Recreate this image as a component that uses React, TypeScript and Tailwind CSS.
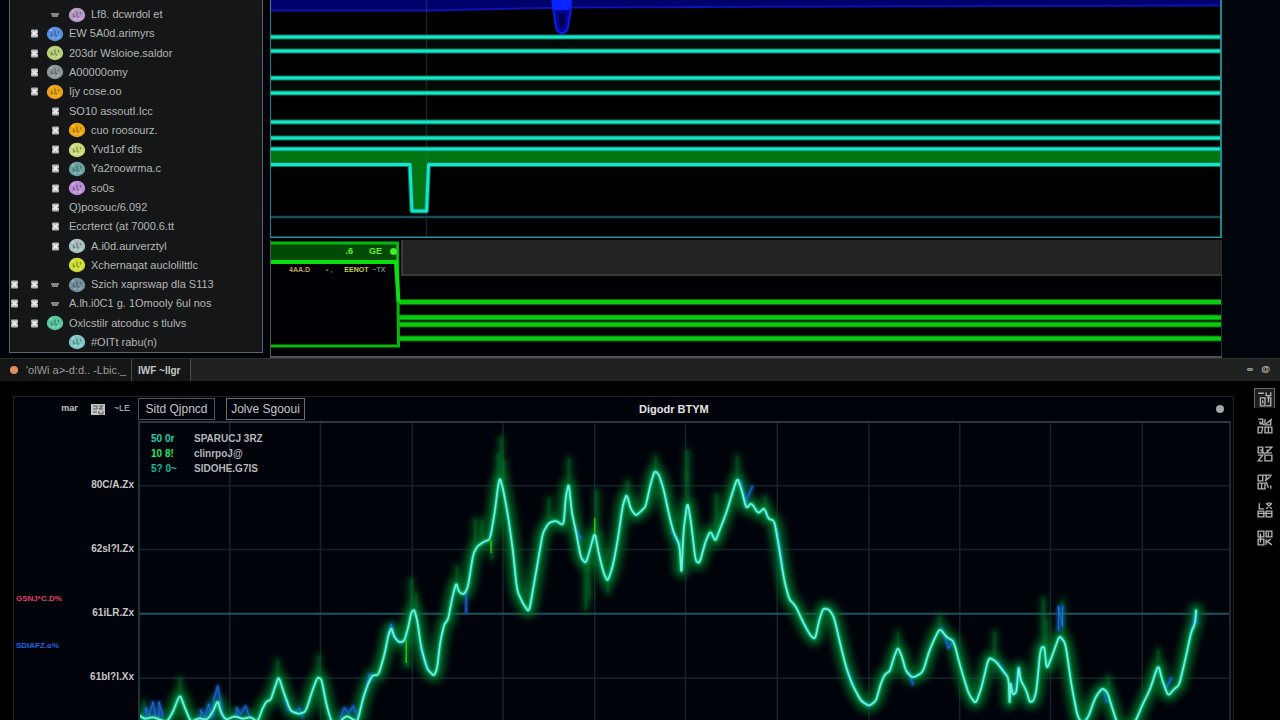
import type { ReactNode } from 'react';
import clsx from 'clsx';

type TreeRow = {
    label: string;
    marks: string; // one character per column: x = box, d = dash, - = empty, o = node icon
    color?: string;
};

const treeRows: TreeRow[] = [
    { label: 'Lf8. dcwrdol et', marks: '--do', color: '#b79ac6' },
    { label: 'EW 5A0d.arimyrs', marks: '-xo', color: '#5a8fe0' },
    { label: '203dr Wsloioe.saldor', marks: '-xo', color: '#b9cf78' },
    { label: 'A00000omy', marks: '-xo', color: '#8b9797' },
    { label: 'Ijy cose.oo', marks: '-xo', color: '#eca40f' },
    { label: 'SO10 assoutI.Icc', marks: '--x' },
    { label: 'cuo roosourz.', marks: '--xo', color: '#eda80e' },
    { label: 'Yvd1of dfs', marks: '--xo', color: '#cbdc78' },
    { label: 'Ya2roowrma.c', marks: '--xo', color: '#68a3a3' },
    { label: 'so0s', marks: '--xo', color: '#bd8edb' },
    { label: 'Q)posouc/6.092', marks: '--x' },
    { label: 'Eccrterct (at 7000.6.tt', marks: '--x' },
    { label: 'A.i0d.aurverztyl', marks: '--xo', color: '#a9c0c0' },
    { label: 'Xchernaqat auclolilttlc', marks: '---o', color: '#cfe032' },
    { label: 'Szich xaprswap dla S113', marks: 'xxdo', color: '#74909c' },
    { label: 'A.lh.i0C1 g. 1Omooly 6ul nos', marks: 'xxd' },
    { label: 'Oxlcstilr atcoduc s tlulvs', marks: 'xxo', color: '#5cc79f' },
    { label: '#OITt rabu(n)', marks: '---o', color: '#7fc6c6' },
];

const columnWidths = ['w-[14px]', 'w-5 justify-center', 'w-[22px] justify-center', 'w-[22px] justify-center'];

function Mark({ kind, color }: { kind: string; color?: string }) {
    if (kind === 'x') {
        return (
            <svg width="9" height="9" viewBox="0 0 9 9">
                <rect x="1" y="0.5" width="7" height="8" rx="1" fill="#b4b8b8" />
                <path d="M2.500 2.500l4 4M6.500 2.500l-4 4" stroke="#f2f2f2" strokeWidth="1.600" />
                <path d="M1 4h1M7 4.500h1" stroke="#4b5050" strokeWidth="1" />
            </svg>
        );
    }
    if (kind === 'd') {
        return (
            <svg width="10" height="6" viewBox="0 0 10 6">
                <path d="M1 2h8M2 4h6" stroke="#a5adad" strokeWidth="1.600" />
            </svg>
        );
    }
    if (kind === 'o') {
        return (
            <svg width="18" height="16" viewBox="0 0 18 16" className="shrink-0">
                <ellipse cx="9" cy="8" rx="8.200" ry="7.200" fill={color} />
                <path d="M9 4.500v4l2 2M5.500 6.500v3h2M12.500 5v2.500" fill="none" stroke="#1c2626" strokeOpacity="0.4" strokeWidth="1.300" />
                <path d="M4 5l2-2M10.500 12.500l3-2M6 12h2" stroke="#fff" strokeOpacity="0.35" strokeWidth="1.400" />
            </svg>
        );
    }
    return null;
}

function Tree() {
    return (
        <ul className="ml-[9px] mb-[5px] w-[254px] flex flex-col border border-t-0 border-[#5f6363] bg-[#141617] pt-[5px] text-[11px] text-[#b4b6b6]">
            {treeRows.map((row) => (
                <li key={row.label} className="flex flex-1 items-center">
                    {row.marks.split('').map((kind, i) => (
                        <span key={i} className={clsx('flex shrink-0', columnWidths[i])}>
                            <Mark kind={kind} color={row.color} />
                        </span>
                    ))}
                    <span className="whitespace-nowrap pl-[3px] leading-none">{row.label}</span>
                </li>
            ))}
        </ul>
    );
}

const signalLines = [37, 51, 78, 93, 122, 138, 149];

function SignalPane() {
    return (
        <div className="bg-black">
            <svg viewBox="270 0 952 238" preserveAspectRatio="none" className="block h-[238px] w-full">
                {/* blue band */}
                <path d="M270 0H1222V5L850 6 570 7 426 10H270z" fill="#00006c" />
                <path d="M270 10.500H426L570 7.500 850 6.500 1222 5.500" fill="none" stroke="#0a12b8" strokeWidth="2" />
                <path d="M553 0h18v8l-3 19q-1 6-6 6t-6-6l-3-19z" fill="#0204a0" stroke="#0c1ce4" strokeWidth="2" />
                <path d="M551 0h20l-2 10h-15z" fill="#0a24ff" />
                <path d="M559 13h6v14h-6z" fill="#010148" />
                <path d="M270 37h952v14H270zM270 78h952v15H270zM270 122h952v16H270z" fill="#000a05" />
                <path d="M270 149H1222V164.500H429L427 211H412L410 164.500H270z" fill="#00740e" />
                <path d="M426.500 0V238" stroke="#3e6a6a" strokeOpacity="0.35" strokeWidth="1.500" />
                {signalLines.map((y) => (
                    <g key={y}>
                        <path d={`M271 ${y}H1221`} stroke="#087a66" strokeWidth="5" />
                        <path d={`M271 ${y}H1221`} stroke="#14e6c6" strokeWidth="3" />
                    </g>
                ))}
                <path d="M271 164.500H410L412 211H426.500L428.500 164.500H1221" fill="none" stroke="#087a66" strokeWidth="5" strokeLinejoin="round" />
                <path d="M271 164.500H410L412 211H426.500L428.500 164.500H1221" fill="none" stroke="#14e6c6" strokeWidth="3" strokeLinejoin="round" />
                <path d="M270 217H1222" stroke="#174c58" strokeWidth="2.500" />
                <path d="M270 0V237.500H1221V0" fill="none" stroke="#25939b" strokeWidth="1.800" />
            </svg>
        </div>
    );
}

function TriggerPane() {
    return (
        <div className="mt-[2px] flex h-[118px] border-b-2 border-l border-[#505256] bg-[#000104]">
            <div className="relative w-[130px] shrink-0">
                <svg viewBox="271 240 130 116" className="absolute inset-0 h-full w-full">
                    <path d="M271 243H398V262H271z" fill="#004b04" />
                    <path d="M271 243H397.500L398.500 346H271" fill="none" stroke="#08b80c" strokeWidth="3" />
                    <path d="M271 262H396L398.500 302" fill="none" stroke="#0ae010" strokeWidth="4" />
                </svg>
                <div className="relative flex h-[23px] items-center justify-end gap-4 pr-1 text-[9px] font-bold text-[#66f02c]">
                    <span>.6</span>
                    <span>GE</span>
                    <span className="-ml-2 h-[7px] w-[7px] rounded-full bg-[#46e828]" />
                </div>
                <div className="relative flex h-3 items-center pl-[18px] text-[7px] font-bold leading-none">
                    <span className="text-[#c3a05c]">4AA.D</span>
                    <span className="ml-4 text-[#6b7c80]">• ,</span>
                    <span className="ml-3 text-[#c8cf4e]">EENOT</span>
                    <span className="ml-1 text-[#7d8487]">~TX</span>
                </div>
            </div>
            <div className="flex flex-1 flex-col border-r border-[#2a2c2c]">
                <div className="h-9 border-b-2 border-l-2 border-[#3a3c3c] bg-[#232323]" />
                <svg viewBox="401 276 820 80" preserveAspectRatio="none" className="block w-full flex-1 overflow-visible">
                    <path d="M397 302H1221M397 317.500H1221M397 324.500H1221M397 338.500H1221" stroke="#056a05" strokeWidth="6" />
                    <path d="M397 302H1221M397 317.500H1221M397 324.500H1221M397 338.500H1221" stroke="#0ccc10" strokeWidth="4" />
                </svg>
            </div>
        </div>
    );
}

// Engine speed trace, in plot units
const trace =
    '139,716 144,719 152,717 160,720 166,722 172,712 179,694 184,708 190,722 198,718 206,720 212,712 217,700 220,712 225,720 234,716 242,719 250,717 257,722 262,708 266,701 270,700 274,688 278,676 283,692 290,711 298,714 305,712 312,690 317,677 321,679 326,705 331,722 338,724 343,718 347,716 352,719 357,722 363,697 368,683 372,675 378,675 384,655 388,635 391,627 394,637 399,642 404,641 408,627 411,612 414,609 417,620 421,648 427,669 434,676 437,668 440,642 444,624 448,619 452,598 456,582 459,592 464,594 468,586 473,554 477,546 484,541 490,539 495,510 498,485 500,477 503,488 508,515 513,550 517,590 523,603 529,612 533,590 539,555 543,532 549,522 556,520 562,524 564,522 566,495 569,482 572,512 576,530 581,557 586,563 590,550 595,531 599,553 604,573 608,581 613,566 618,540 623,505 627,493 631,508 636,515 641,511 646,506 651,483 655,470 659,473 664,488 669,512 674,532 680,544 682,576 684,530 688,500 692,525 696,560 700,563 706,541 711,530 716,541 720,530 727,512 733,492 738,477 742,488 747,508 752,502 759,513 765,507 769,518 775,520 779,542 785,580 790,599 796,605 804,622 811,635 816,639 820,620 824,608 830,609 835,617 841,643 847,667 853,684 862,701 870,706 877,701 882,683 886,674 891,671 895,657 899,647 903,656 907,671 914,678 924,672 930,652 935,640 941,628 948,637 955,641 962,668 970,694 977,704 983,687 990,657 997,661 1004,670 1010,678 1011,706 1012,681 1014,695 1018,692 1020,665 1022,680 1028,691 1031,702 1035,701 1038,690 1042,648 1046,646 1048,670 1055,652 1061,635 1067,643 1073,685 1079,716 1084,724 1090,717 1097,697 1104,688 1109,692 1113,705 1119,724 1128,730 1137,722 1145,703 1152,689 1160,664 1164,680 1170,696 1176,689 1181,685 1187,660 1193,632 1197,623 1198,610';

// Rounds the corners by running quadratic curves through the segment midpoints
function smooth(points: string) {
    const p = points.split(' ').map((pair) => pair.split(',').map(Number));
    let d = `M${p[0][0]} ${p[0][1]}`;
    for (let i = 1; i < p.length - 1; i++) {
        const [x, y] = p[i];
        const [nx, ny] = p[i + 1];
        const [px, py] = p[i - 1];
        d += `L${x + (px - x) * 0.3} ${y + (py - y) * 0.3}Q${x} ${y} ${x + (nx - x) * 0.3} ${y + (ny - y) * 0.3}`;
    }
    const last = p[p.length - 1];
    return `${d}L${last[0]} ${last[1]}`;
}

const tracePath = smooth(trace);

// Raw samples around the filtered trace
const greenNoise =
    'M143 722v-20M179 694v-16M277 674v-14M318 676v-20M408 628v38M411 607v-28M416 606v-12M405 640v25M457 580v-14M475 545v-26M482 538v-18M492 540v18M498 476v-22M501 474v-37M504 478v-18M549 518v-20M569 480v-22M586 563v46M589 560v38M597 530v-40M595 520v24M608 582v10M628 490v-10M656 468v-12M688 500v-50M687 480v-10M717 540v-46M738 476v-20M766 508v-12M899 646v-14M941 626v-10M996 660v-28M1045 645v-47M1048 650v-30M1064 635v-34M1110 690v-14M1160 662v-12';
const blueNoise =
    'M145 720v-12l3 8 4-14 3 15M158 718v-16l4 14M200 720v-10l4 8 4-14 3 14M213 716v-16l4-14 2 12 3 20M236 718v-10l4 6 5-8 4 12M284 698l4 12 6 2 5-4 3 9M340 718l4-10 4 5 5-7 4 10M364 696l5-22 4 6M387 636l4-12 4 14 6 5M421 648l6 20M466 592v20M576 528l5 10M673 530l8 18M741 480l5 22 7-16M778 530l5 38M848 670l6 16M870 706l-5-4M910 672l4 12M943 628l7 20 5-8M1000 662l6 12M1016 694l4-26M1060 630v-24l4 20v-20M1105 690l3 12M1168 688l5-10M1194 630l3-18 2 10';

const gridX = [229, 320, 412, 503, 595, 686, 778, 870, 961, 1052, 1144];
const gridY = [485, 549, 678];

function Plot() {
    return (
        <svg viewBox="139 422 1092 298" preserveAspectRatio="none" className="absolute inset-0 h-full w-full">
            <defs>
                <filter id="wide" x="-5%" y="-10%" width="110%" height="120%">
                    <feGaussianBlur stdDeviation="4" />
                </filter>
                <filter id="tight" x="-5%" y="-10%" width="110%" height="120%">
                    <feGaussianBlur stdDeviation="1.200" />
                </filter>
            </defs>
            <g stroke="#14242a" strokeWidth="1.500">
                {gridX.map((x) => <path key={x} d={`M${x} 422V720`} />)}
                {gridY.map((y) => <path key={y} d={`M139 ${y}H1231`} />)}
            </g>
            <path d="M139 613.500H1231" stroke="#175660" strokeWidth="2" />
            <g fill="none" strokeLinejoin="round" strokeLinecap="round">
                <path d={greenNoise} stroke="#0a7a24" strokeOpacity="0.6" strokeWidth="6" filter="url(#wide)" />
                <path d={tracePath} stroke="#066a26" strokeOpacity="0.85" strokeWidth="15" filter="url(#wide)" />
                <path d={greenNoise} stroke="#0e8a30" strokeOpacity="0.45" strokeWidth="2" filter="url(#tight)" />
                <path d={blueNoise} stroke="#1250c8" strokeOpacity="0.75" strokeWidth="4" filter="url(#tight)" />
                <path d={blueNoise} stroke="#2c94c8" strokeOpacity="0.6" strokeWidth="1" />
                <path d="M406 640v22M595 518v14M491 540v12" stroke="#48d808" strokeOpacity="0.8" strokeWidth="1.500" />
                <path d={tracePath} stroke="#0db27c" strokeWidth="4" filter="url(#tight)" />
                <path d={tracePath} stroke="#6ff0dc" strokeWidth="1.800" />
            </g>
        </svg>
    );
}

const legend = [
    { code: '50 0r', name: 'SPARUCJ 3RZ', style: 'text-[#1fd0a8]' },
    { code: '10 8!', name: 'clinrpoJ@', style: 'text-[#1fe860]' },
    { code: '5? 0~', name: 'SIDOHE.G7IS', style: 'text-[#17b89c]' },
];

const axisLabels = ['80C/A.Zx', '62sI?I.Zx', '61iLR.Zx', '61bI?I.Xx'];

const tools: { name: string; glyph: ReactNode }[] = [
    { name: 'Layout', glyph: <path d="M1 2h5M8 1v3h4V1M3 6h4v7H3zM9 6h3v7H8M5 8v3M10 4v6" /> },
    { name: 'Cursor', glyph: <path d="M1 1h4v4H2M7 1v5h5V2M8 5l5-4M1 8h4l-1 5H1zM7 8h6v5H7zM10 8v5M2 3l4 3" /> },
    { name: 'Zoom', glyph: <path d="M1 1h4v5H1zM7 1h6l-5 5h5M1 8h4l-4 5h4M7 8h6v5H7zM3 3l4 4M9 3v3" /> },
    { name: 'Measure', glyph: <path d="M1 1h12M1 1v5h4V1M7 6l5-4M1 8h6v5H1zM8 7l2 5M12 10v3M4 8v5M8 1v4" /> },
    { name: 'Markers', glyph: <path d="M2 1v5h4M8 1l5 5M13 1L8 6M1 8h5v5H1zM8 8h5v5H8zM1 10h12M9 1h3" /> },
    { name: 'Table', glyph: <path d="M1 1h5v5H1zM8 1h5v5H8zM1 8v5h5V8zM8 8v5M12 8l-3 2 4 3M10 2v4M3 3v8" /> },
];

export default function App() {
    return (
        <div className="flex h-screen flex-col overflow-hidden bg-black font-['Liberation_Sans',sans-serif] text-[#c4c6c6]">
            <div className="flex bg-[#01030a]">
                <aside className="flex w-[270px] shrink-0">
                    <Tree />
                </aside>
                <main className="min-w-0 flex-1">
                    <SignalPane />
                    <TriggerPane />
                </main>
                <div className="w-[58px] shrink-0 bg-[#01050c]" />
            </div>

            {/* Document tabs */}
            <div className="flex h-[23px] shrink-0 items-center border-t border-[#2d2f2f] bg-[#202222] text-[11px]">
                <div className="flex h-full items-center bg-[#151616]">
                    <button className="flex h-full w-[132px] items-center gap-2 overflow-hidden border-r border-[#4a4c4c] pl-[10px] text-[#9b9d9d]">
                        <span className="h-2 w-2 shrink-0 rounded-full bg-[#e09060]" />
                        <span className="whitespace-nowrap">'olWi a&gt;-d:d.. -Lbic._</span>
                    </button>
                    <button className="h-full w-[59px] border-r border-[#4a4c4c] pl-[6px] text-left text-[10px] font-bold">IWF ~Ilgr</button>
                </div>
                <div className="ml-auto flex items-center gap-2 pr-[10px] text-[9px] font-bold">
                    <button>∞</button>
                    <button>@</button>
                </div>
            </div>

            <div className="flex min-h-0 flex-1">
                <section className="ml-[13px] mt-[15px] flex min-w-0 flex-1 flex-col border border-b-0 border-[#1d2426] bg-[#01030b]">
                    <div className="flex h-6 shrink-0 items-center">
                        <div className="flex w-[124px] items-center justify-end gap-2 pr-2 text-[9px] font-bold">
                            <span>mar</span>
                            <svg width="16" height="13" viewBox="0 0 16 13" className="ml-1">
                                <rect x="1" y="1" width="14" height="11" fill="#c4c4c4" />
                                <path d="M3 3h4v3H3M9 3h4L9 6h4M3 9h4M9 8v3h4V8" fill="none" stroke="#555" strokeWidth="1" />
                            </svg>
                            <span className="font-normal">~LE</span>
                        </div>
                        <div className="flex gap-[11px] text-[12px]">
                            <button className="h-[22px] w-[77px] whitespace-nowrap border border-[#505456]">Sitd Qjpncd</button>
                            <button className="h-[22px] w-[79px] whitespace-nowrap border border-[#6c7072]">Jolve Sgooui</button>
                        </div>
                        <h2 className="ml-[334px] text-[11px] font-bold text-[#e4e4e4]">Digodr BTYM</h2>
                        <span className="ml-auto mr-[9px] h-2 w-2 rounded-full bg-[#a4a6a6]" />
                    </div>

                    <div className="flex min-h-0 flex-1">
                        <div className="w-[50px] shrink-0 pt-[170px] text-[8px] font-bold leading-4">
                            <p className="pl-[2px] text-[#e0406c]">GSNJ*C.D%</p>
                            <p className="mt-[31px] pl-[2px] text-[#1668e8]">SDIAFZ.o%</p>
                        </div>
                        <div className="w-[74px] shrink-0 pt-8 text-right text-[10px] font-bold">
                            {axisLabels.map((label) => (
                                <p key={label} className="pr-1 leading-[64px]">{label}</p>
                            ))}
                        </div>
                        <div className="relative mr-[2px] min-w-0 flex-1 border-l-2 border-r-2 border-t-2 border-[#1b3437] border-r-[#22272a] border-t-[#2f3639]">
                            <Plot />
                            <table className="absolute left-[11px] top-2 text-left text-[10px] font-bold leading-[15px] text-[#b4b8b8]">
                                <tbody>
                                    {legend.map((item) => (
                                        <tr key={item.name}>
                                            <td className={clsx('w-[43px] p-0', item.style)}>{item.code}</td>
                                            <td className="whitespace-nowrap p-0">{item.name}</td>
                                        </tr>
                                    ))}
                                </tbody>
                            </table>
                        </div>
                    </div>
                </section>

                <nav className="flex w-[46px] shrink-0 flex-col items-end gap-2 pr-[5px] pt-[7px]">
                    {tools.map((tool, i) => (
                        <button
                            key={tool.name}
                            aria-label={tool.name}
                            className={clsx('flex h-5 w-[21px] items-center justify-center', i === 0 && 'border-x border-t border-[#6a6c6c] bg-[#1c1d1d]')}
                        >
                            <svg width="16" height="16" viewBox="0 0 14 14" fill="none" stroke="#b0b2b2" strokeWidth="1.200">{tool.glyph}</svg>
                        </button>
                    ))}
                </nav>
            </div>
        </div>
    );
}
